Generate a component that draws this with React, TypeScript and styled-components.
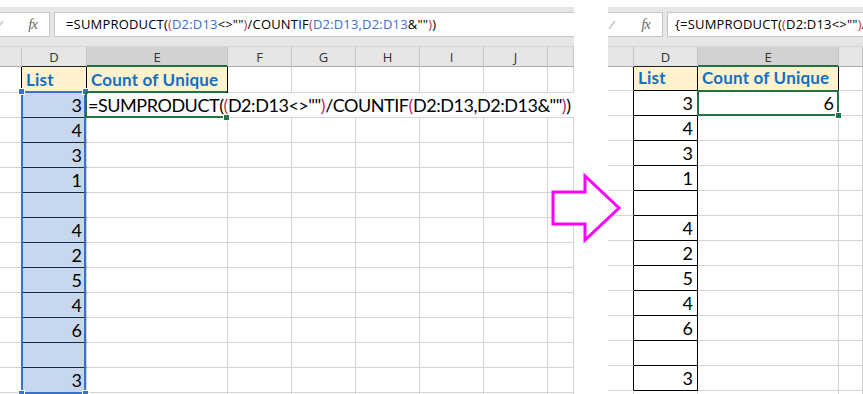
import React from 'react';
import styled, { createGlobalStyle } from 'styled-components';

const GlobalStyle = createGlobalStyle`
  html, body {
    margin: 0;
    padding: 0;
    background: #fff;
  }
  body {
    width: 863px;
    height: 394px;
    overflow: hidden;
    font-family: Lato, "Liberation Sans", sans-serif;
  }
`;

const GRID = '#d4d4d4';
const BLACK = '#000';
const GREEN = '#217346';
const SEL = '#3a72c6';
const PAREN = '#c42d6a';
const REF = '#3b6fc7';

const Page = styled.div`
  position: relative;
  display: flex;
  gap: 34px;
  width: 863px;
  height: 394px;
  overflow: hidden;
`;

const Panel = styled.div<{ $w: number }>`
  width: ${(p) => p.$w}px;
  flex: none;
  height: 394px;
  display: flex;
  flex-direction: column;
  overflow: hidden;
  padding-top: 7px;
  box-sizing: border-box;
`;

const Toolbar = styled.div`
  height: 40px;
  flex: none;
  background: #e6e6e6;
  display: flex;
  align-items: flex-start;
  gap: 4px;
  padding-top: 5px;
  box-sizing: border-box;
  border-bottom: 1px solid #d6d6d6;
`;

const NameArea = styled.div<{ $w: number }>`
  position: relative;
  width: ${(p) => p.$w}px;
  height: 25px;
  flex: none;
  box-sizing: border-box;
  background: #fff;
  border: 1px solid #c6c6c6;
  border-left: none;
  display: flex;
  align-items: center;
  justify-content: flex-end;
  padding-right: 12px;
`;

const Fx = styled.span`
  font-family: "Liberation Serif", serif;
  font-style: italic;
  font-size: 15px;
  color: #6a6a6a;
  letter-spacing: -1px;
`;

const Tick = styled.svg`
  position: absolute;
  top: 5px;
`;

const FormulaBox = styled.div<{ $pad: number }>`
  flex: 1;
  height: 25px;
  box-sizing: border-box;
  background: #fff;
  border: 1px solid #c6c6c6;
  border-right: none;
  padding-left: ${(p) => p.$pad}px;
  font-family: "Open Sans", "Liberation Sans", sans-serif;
  font-size: 13px;
  letter-spacing: 0.18px;
  line-height: 23px;
  color: #000;
  white-space: nowrap;
  overflow: hidden;
`;

const Tok = styled.span<{ $c: string }>`
  color: ${(p) => p.$c};
`;

const Sheet = styled.div<{ $cols: string; $rows: string }>`
  display: grid;
  grid-template-columns: ${(p) => p.$cols};
  grid-template-rows: ${(p) => p.$rows};
`;

type Place = { $row: number | string; $col: number | string };

const HeadCell = styled.div<Place & { $active?: boolean; $under?: string }>`
  grid-row: ${(p) => p.$row};
  grid-column: ${(p) => p.$col};
  box-sizing: border-box;
  background: ${(p) => (p.$active ? '#d2d2d2' : '#e6e6e6')};
  border-right: 1px solid #c4c4c4;
  border-bottom: ${(p) => (p.$active ? `2px solid ${GREEN}` : `1px solid ${p.$under ?? '#ababab'}`)};
  display: flex;
  align-items: center;
  justify-content: center;
  font-family: "Open Sans", "Liberation Sans", sans-serif;
  font-size: 13px;
  color: #333;
  padding-top: ${(p) => (p.$active ? 1 : 0)}px;
`;

const Cell = styled.div<
  Place & { $r?: string; $b?: string; $bg?: string; $right?: boolean; $head?: boolean }
>`
  grid-row: ${(p) => p.$row};
  grid-column: ${(p) => p.$col};
  box-sizing: border-box;
  min-width: 0;
  background: ${(p) => p.$bg ?? '#fff'};
  border-right: 1px solid ${(p) => p.$r ?? GRID};
  border-bottom: 1px solid ${(p) => p.$b ?? GRID};
  display: flex;
  align-items: flex-end;
  justify-content: ${(p) => (p.$right ? 'flex-end' : 'flex-start')};
  padding: 0 4px 2px 4px;
  font-size: ${(p) => (p.$head ? 17 : 18)}px;
  letter-spacing: ${(p) => (p.$head ? '0.2px' : '0')};
  line-height: 20px;
  font-weight: ${(p) => (p.$head ? 700 : 400)};
  color: ${(p) => (p.$head ? '#1170c4' : '#000')};
  white-space: nowrap;
`;

const EditCell = styled.div<Place>`
  grid-row: ${(p) => p.$row};
  grid-column: ${(p) => p.$col};
  box-sizing: border-box;
  background: #fff;
  border-bottom: 1px solid ${GRID};
  display: flex;
  align-items: flex-end;
  padding: 0 0 2px 1px;
  font-size: 18px;
  letter-spacing: -0.45px;
  line-height: 20px;
  white-space: nowrap;
  overflow: hidden;
  z-index: 1;
`;

const Overlay = styled.div<Place>`
  grid-row: ${(p) => p.$row};
  grid-column: ${(p) => p.$col};
  position: relative;
  pointer-events: none;
  z-index: 2;
`;

const Frame = styled.div<{
  $color: string;
  $inset: string;
  $open?: boolean;
}>`
  position: absolute;
  inset: ${(p) => p.$inset};
  border: 2px solid ${(p) => p.$color};
  border-right-color: ${(p) => (p.$open ? 'transparent' : p.$color)};
`;

const Handle = styled.div<{ $color: string; $x: string; $y: string }>`
  position: absolute;
  width: 5px;
  height: 5px;
  background: ${(p) => p.$color};
  border: 1px solid #fff;
  ${(p) => p.$x};
  ${(p) => p.$y};
`;

const Arrow = styled.svg`
  position: absolute;
  left: 550px;
  top: 172px;
  z-index: 5;
`;

type Token = [string, 'k' | 'r' | 'b'];

const FORMULA: Token[] = [
  ['=SUMPRODUCT(', 'k'],
  ['(', 'r'],
  ['D2:D13', 'b'],
  ['<>""', 'k'],
  [')', 'r'],
  ['/COUNTIF', 'k'],
  ['(', 'r'],
  ['D2:D13,D2:D13', 'b'],
  ['&""', 'k'],
  [')', 'r'],
  [')', 'k'],
];

const LIST = ['3', '4', '3', '1', '', '4', '2', '5', '4', '6', '', '3'];

function Formula({ refs }: { refs: boolean }) {
  return (
    <>
      {FORMULA.map(([text, kind], i) => (
        <Tok key={i} $c={kind === 'r' ? PAREN : kind === 'b' && refs ? REF : '#000'}>
          {text}
        </Tok>
      ))}
    </>
  );
}

function TickIcon({ x }: { x: number }) {
  return (
    <Tick width="12" height="14" viewBox="0 0 12 14" style={{ left: x }}>
      <path d="M1 11 L7 3" stroke="#c8c8c8" strokeWidth="1.5" fill="none" />
    </Tick>
  );
}

function LeftSheet() {
  const letters = ['D', 'E', 'F', 'G', 'H', 'I', 'J', ''];
  const cells: React.ReactNode[] = [];

  cells.push(<HeadCell key="corner" $row={1} $col={1} />);
  letters.forEach((l, i) => {
    cells.push(
      <HeadCell key={`h${i}`} $row={1} $col={i + 2} $active={l === 'E'} $under={l === 'D' ? '#222' : undefined}>
        {l}
      </HeadCell>
    );
  });

  cells.push(<Cell key="r1a" $row={2} $col={1} $r={BLACK} />);
  cells.push(
    <Cell key="r1d" $row={2} $col={2} $bg="#fff2cc" $r={BLACK} $b={BLACK} $head>
      List
    </Cell>
  );
  cells.push(
    <Cell key="r1e" $row={2} $col={3} $bg="#fff2cc" $r={BLACK} $b={BLACK} $head>
      Count of Unique
    </Cell>
  );
  for (let c = 4; c <= 9; c++) cells.push(<Cell key={`r1${c}`} $row={2} $col={c} />);

  LIST.forEach((v, i) => {
    const row = i + 3;
    cells.push(<Cell key={`a${row}`} $row={row} $col={1} />);
    cells.push(
      <Cell key={`d${row}`} $row={row} $col={2} $bg="#c6d7ee" $b="#1c2640" $right>
        {v}
      </Cell>
    );
    if (row === 3) {
      cells.push(
        <EditCell key="edit" $row={3} $col="3 / -1">
          <Formula refs={false} />
        </EditCell>
      );
    } else {
      for (let c = 3; c <= 9; c++) cells.push(<Cell key={`c${row}-${c}`} $row={row} $col={c} />);
    }
  });
  for (let c = 1; c <= 9; c++) cells.push(<Cell key={`z${c}`} $row={15} $col={c} />);

  return (
    <Sheet
      $cols="22px 65px 141px 64px 64px 64px 64px 64px 1fr"
      $rows="20px 26px repeat(13, 25px)"
    >
      {cells}
      <Overlay $row="3 / 15" $col={2}>
        <Frame $color={SEL} $inset="-2px 1px -1px -1px" />
        <Handle $color={SEL} $x="left: -4px" $y="top: -5px" />
        <Handle $color={SEL} $x="right: -2px" $y="top: -5px" />
        <Handle $color={SEL} $x="left: -4px" $y="bottom: -4px" />
        <Handle $color={SEL} $x="right: -2px" $y="bottom: -4px" />
      </Overlay>
      <Overlay $row={3} $col={3}>
        <Frame $color={GREEN} $inset="-2px 0 0 -2px" $open />
        <Handle $color={GREEN} $x="right: -2px" $y="bottom: -3px" />
      </Overlay>
    </Sheet>
  );
}

function RightSheet() {
  const cells: React.ReactNode[] = [];
  cells.push(<HeadCell key="corner" $row={1} $col={1} />);
  cells.push(<HeadCell key="hd" $row={1} $col={2} $under="#222">D</HeadCell>);
  cells.push(<HeadCell key="he" $row={1} $col={3} $active>E</HeadCell>);
  cells.push(<HeadCell key="hf" $row={1} $col={4} />);

  cells.push(<Cell key="r1a" $row={2} $col={1} $r={BLACK} />);
  cells.push(
    <Cell key="r1d" $row={2} $col={2} $bg="#fff2cc" $r={BLACK} $b={BLACK} $head>
      List
    </Cell>
  );
  cells.push(
    <Cell key="r1e" $row={2} $col={3} $bg="#fff2cc" $r={BLACK} $b={BLACK} $head>
      Count of Unique
    </Cell>
  );
  cells.push(<Cell key="r1f" $row={2} $col={4} />);

  LIST.forEach((v, i) => {
    const row = i + 3;
    cells.push(<Cell key={`a${row}`} $row={row} $col={1} $r={BLACK} />);
    cells.push(
      <Cell key={`d${row}`} $row={row} $col={2} $r={BLACK} $b={BLACK} $right>
        {v}
      </Cell>
    );
    cells.push(
      <Cell key={`e${row}`} $row={row} $col={3} $right>
        {row === 3 ? '6' : ''}
      </Cell>
    );
    cells.push(<Cell key={`f${row}`} $row={row} $col={4} />);
  });
  for (let c = 1; c <= 4; c++) cells.push(<Cell key={`z${c}`} $row={15} $col={c} />);

  return (
    <Sheet $cols="26px 64px 141px 1fr" $rows="20px 24px repeat(13, 25px)">
      {cells}
      <Overlay $row={3} $col={3}>
        <Frame $color={GREEN} $inset="-1px 0 0 -1px" />
        <Handle $color={GREEN} $x="right: -3px" $y="bottom: -3px" />
      </Overlay>
    </Sheet>
  );
}

export default function App() {
  return (
    <>
      <GlobalStyle />
      <Page>
        <Panel $w={574}>
          <Toolbar>
            <NameArea $w={50}>
              <TickIcon x={-4} />
              <Fx>fx</Fx>
            </NameArea>
            <FormulaBox $pad={11}>
              <Formula refs />
            </FormulaBox>
          </Toolbar>
          <LeftSheet />
        </Panel>
        <Panel $w={255}>
          <Toolbar>
            <NameArea $w={55}>
              <TickIcon x={0} />
              <Fx>fx</Fx>
            </NameArea>
            <FormulaBox $pad={7}>
              {'{'}
              <Formula refs={false} />
              {'}'}
            </FormulaBox>
          </Toolbar>
          <RightSheet />
        </Panel>
        <Arrow width="74" height="72" viewBox="0 0 74 72">
          <polygon
            points="3,20 35,20 35,4 69,36 35,68 35,52 3,52"
            fill="#fff"
            stroke="#ff00ff"
            strokeWidth="3"
            strokeLinejoin="miter"
          />
        </Arrow>
      </Page>
    </>
  );
}
